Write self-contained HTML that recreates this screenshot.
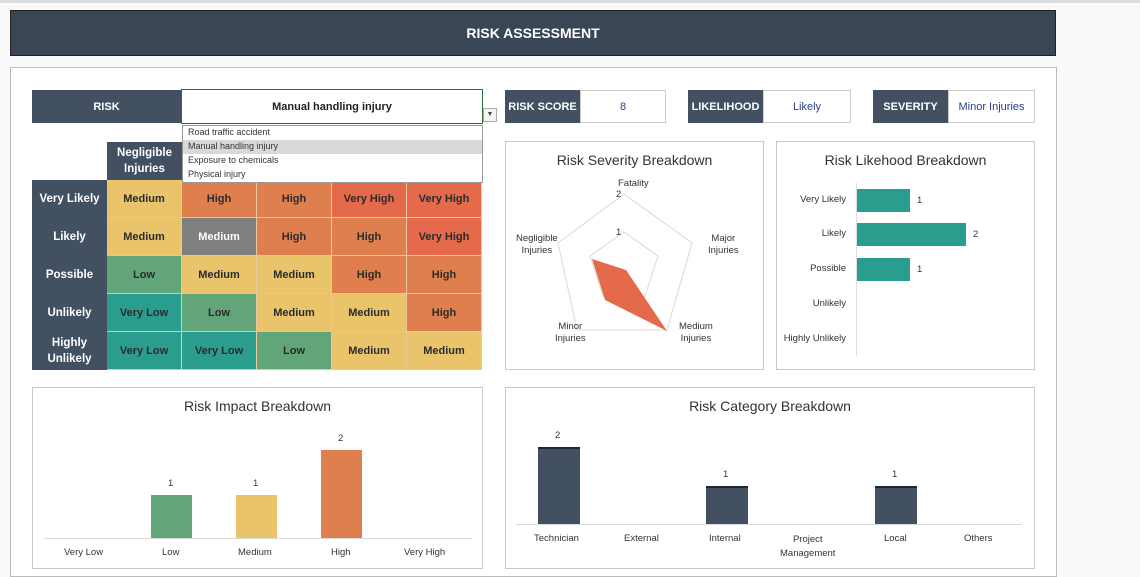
<!DOCTYPE html><html><head><style>
*{margin:0;padding:0;box-sizing:border-box}
body{width:1140px;height:570px;background:#fafafa;position:relative;overflow:hidden;font-family:"Liberation Sans",sans-serif}
.a{position:absolute}
.c{display:flex;align-items:center;justify-content:center;text-align:center}
.d{background:#435061;color:#fff;font-weight:bold;font-size:11px}
.w{background:#fff;border:1px solid #ccc}
.cell{position:absolute;width:75px;height:38px;display:flex;align-items:center;justify-content:center;font-weight:bold;font-size:11px;color:#2b2b2b;border-right:1px solid #e8c9a0;border-bottom:1px solid #e0c8a0}
.Y{background:#e9c46a}.O{background:#e07f4e}.R{background:#e5694b}.G{background:#62a578}.T{background:#2a9d8f}.X{background:#7f7f7f;color:#fff}
.panel{position:absolute;background:#fff;border:1px solid #c8c8c8}
.tt{position:absolute;width:100%;text-align:center;font-size:14px;color:#333}
.s{font-size:9.5px;color:#333;position:absolute}
</style></head><body>
<div class="a" style="left:0;top:0;width:1140px;height:3px;background:#ddd"></div>
<div class="a c" style="left:10px;top:10px;width:1046px;height:46px;background:#3a4556;color:#fff;font-weight:bold;font-size:14px;border:1px solid #222">RISK ASSESSMENT</div>
<div class="a" style="left:10px;top:67px;width:1047px;height:510px;background:#fff;border:1px solid #bbb"></div>

<div class="a c d" style="left:32px;top:90px;width:149px;height:33px">RISK</div>
<div class="a c" style="left:181px;top:89px;width:302px;height:35px;background:#fff;border:1px solid #2d6b3a;font-weight:bold;font-size:11px;color:#222">Manual handling injury</div>
<div class="a" style="left:483px;top:108px;width:14px;height:14px;border:1px solid #aaa;background:#f4f4f4;font-size:7px;color:#444;text-align:center;line-height:12px">▼</div>
<div class="a" style="left:182px;top:125px;width:301px;height:58px;background:#fff;border:1px solid #999;font-size:9px;color:#333;z-index:3">
<div style="padding:1px 5px;height:14px">Road traffic accident</div>
<div style="padding:1px 5px;height:14px;background:#d9d9d9">Manual handling injury</div>
<div style="padding:1px 5px;height:14px">Exposure to chemicals</div>
<div style="padding:1px 5px;height:14px">Physical injury</div></div>

<div class="a c d" style="left:107px;top:142px;width:75px;height:38px;font-size:11.5px;line-height:16px">Negligible<br>Injuries</div>
<div class="a d" style="left:32px;top:180px;width:75px;height:190px;font-size:11.5px">
<div class="c" style="height:38px">Very Likely</div><div class="c" style="height:38px">Likely</div><div class="c" style="height:38px">Possible</div><div class="c" style="height:38px">Unlikely</div><div class="c" style="height:38px;line-height:16px">Highly<br>Unlikely</div></div>

<div class="cell Y" style="left:107px;top:180px">Medium</div><div class="cell O" style="left:182px;top:180px">High</div><div class="cell O" style="left:257px;top:180px">High</div><div class="cell R" style="left:332px;top:180px">Very High</div><div class="cell R" style="left:407px;top:180px">Very High</div>
<div class="cell Y" style="left:107px;top:218px">Medium</div><div class="cell X" style="left:182px;top:218px">Medium</div><div class="cell O" style="left:257px;top:218px">High</div><div class="cell O" style="left:332px;top:218px">High</div><div class="cell R" style="left:407px;top:218px">Very High</div>
<div class="cell G" style="left:107px;top:256px">Low</div><div class="cell Y" style="left:182px;top:256px">Medium</div><div class="cell Y" style="left:257px;top:256px">Medium</div><div class="cell O" style="left:332px;top:256px">High</div><div class="cell O" style="left:407px;top:256px">High</div>
<div class="cell T" style="left:107px;top:294px">Very Low</div><div class="cell G" style="left:182px;top:294px">Low</div><div class="cell Y" style="left:257px;top:294px">Medium</div><div class="cell Y" style="left:332px;top:294px">Medium</div><div class="cell O" style="left:407px;top:294px">High</div>
<div class="cell T" style="left:107px;top:332px">Very Low</div><div class="cell T" style="left:182px;top:332px">Very Low</div><div class="cell G" style="left:257px;top:332px">Low</div><div class="cell Y" style="left:332px;top:332px">Medium</div><div class="cell Y" style="left:407px;top:332px">Medium</div>

<div class="a c d" style="left:505px;top:90px;width:75px;height:33px">RISK SCORE</div>
<div class="a c w" style="left:580px;top:90px;width:86px;height:33px;color:#2c3e8c;font-size:11px">8</div>
<div class="a c d" style="left:688px;top:90px;width:75px;height:33px">LIKELIHOOD</div>
<div class="a c w" style="left:763px;top:90px;width:88px;height:33px;color:#2c3e8c;font-size:11px">Likely</div>
<div class="a c d" style="left:873px;top:90px;width:75px;height:33px">SEVERITY</div>
<div class="a c w" style="left:948px;top:90px;width:87px;height:33px;color:#2c3e8c;font-size:11px">Minor Injuries</div>

<div class="panel" style="left:505px;top:141px;width:259px;height:229px"><div class="tt" style="top:10px">Risk Severity Breakdown</div></div>
<svg class="a" style="left:0;top:0" width="1140" height="570">
<polygon points="624,194 692,243 667,330 577,330 558,243" fill="none" stroke="#d9d9d9"/>
<polygon points="624,232 658,256 645,296 603,296 590,256" fill="none" stroke="#d9d9d9"/>
<polygon points="592,259 626,270 667,331 605,300" fill="#e5694b"/>
</svg>
<div class="s" style="left:618px;top:178px">Fatality</div><div class="s" style="left:616px;top:189px">2</div><div class="s" style="left:616px;top:227px">1</div>
<div class="s" style="left:516px;top:233px;text-align:center;line-height:12px">Negligible<br>Injuries</div>
<div class="s" style="left:708px;top:233px;text-align:center;line-height:12px">Major<br>Injuries</div>
<div class="s" style="left:555px;top:321px;text-align:center;line-height:12px">Minor<br>Injuries</div>
<div class="s" style="left:679px;top:321px;text-align:center;line-height:12px">Medium<br>Injuries</div>

<div class="panel" style="left:776px;top:141px;width:259px;height:229px"><div class="tt" style="top:10px">Risk Likehood Breakdown</div></div>
<div class="a" style="left:856px;top:183px;width:1px;height:173px;background:#ddd"></div>
<div class="a" style="left:857px;top:189px;width:53px;height:23px;background:#2a9d8f"></div>
<div class="a" style="left:857px;top:223px;width:109px;height:23px;background:#2a9d8f"></div>
<div class="a" style="left:857px;top:258px;width:53px;height:23px;background:#2a9d8f"></div>
<div class="s" style="left:917px;top:195px">1</div><div class="s" style="left:973px;top:229px">2</div><div class="s" style="left:917px;top:264px">1</div>
<div class="s" style="right:294px;top:194px">Very Likely</div><div class="s" style="right:294px;top:228px">Likely</div><div class="s" style="right:294px;top:263px">Possible</div><div class="s" style="right:294px;top:298px">Unlikely</div><div class="s" style="right:294px;top:333px">Highly Unlikely</div>

<div class="panel" style="left:32px;top:387px;width:451px;height:182px"><div class="tt" style="top:10px">Risk Impact Breakdown</div></div>
<div class="a" style="left:44px;top:538px;width:428px;height:1px;background:#d9d9d9"></div>
<div class="a" style="left:151px;top:495px;width:41px;height:43px;background:#62a578"></div>
<div class="a" style="left:236px;top:495px;width:41px;height:43px;background:#e9c46a"></div>
<div class="a" style="left:321px;top:450px;width:41px;height:88px;background:#e07f4e"></div>
<div class="s" style="left:168px;top:478px">1</div><div class="s" style="left:253px;top:478px">1</div><div class="s" style="left:338px;top:433px">2</div>
<div class="s" style="left:64px;top:547px">Very Low</div><div class="s" style="left:162px;top:547px">Low</div><div class="s" style="left:238px;top:547px">Medium</div><div class="s" style="left:331px;top:547px">High</div><div class="s" style="left:404px;top:547px">Very High</div>

<div class="panel" style="left:505px;top:387px;width:530px;height:182px"><div class="tt" style="top:10px">Risk Category Breakdown</div></div>
<div class="a" style="left:516px;top:524px;width:506px;height:1px;background:#d9d9d9"></div>
<div class="a" style="left:538px;top:447px;width:42px;height:77px;background:#435061;border-top:2px solid #1e2733"></div>
<div class="a" style="left:706px;top:486px;width:42px;height:38px;background:#435061;border-top:2px solid #1e2733"></div>
<div class="a" style="left:875px;top:486px;width:42px;height:38px;background:#435061;border-top:2px solid #1e2733"></div>
<div class="s" style="left:555px;top:430px">2</div><div class="s" style="left:723px;top:469px">1</div><div class="s" style="left:892px;top:469px">1</div>
<div class="s" style="left:534px;top:533px">Technician</div><div class="s" style="left:624px;top:533px">External</div><div class="s" style="left:709px;top:533px">Internal</div>
<div class="s" style="left:780px;top:533px;text-align:center;line-height:14px">Project<br>Management</div>
<div class="s" style="left:884px;top:533px">Local</div><div class="s" style="left:964px;top:533px">Others</div>
</body></html>
